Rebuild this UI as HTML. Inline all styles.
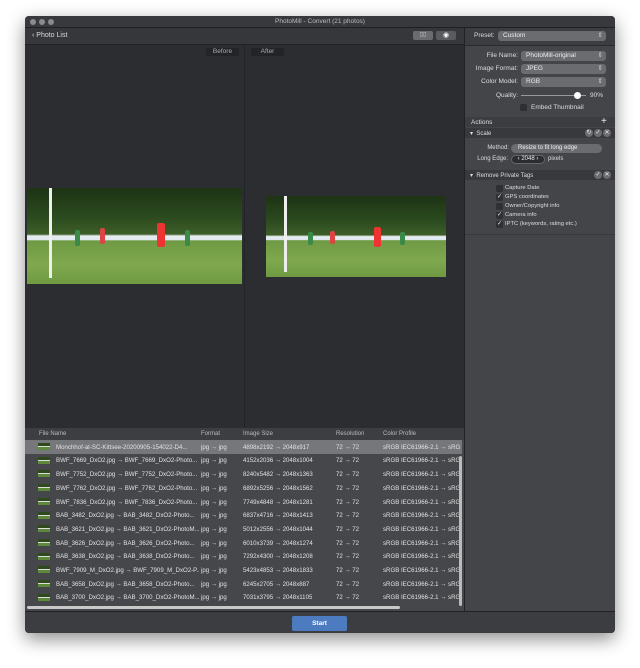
<!DOCTYPE html>
<html><head><meta charset="utf-8"><style>
*{box-sizing:border-box;margin:0;padding:0}
body{width:640px;height:668px;background:#fff;position:relative;overflow:hidden;font-family:"Liberation Sans",sans-serif;color:#ddd}
.a{position:absolute}
.win{left:25px;top:16px;width:590px;height:617px;background:#2c2d31;box-shadow:0 6px 18px rgba(0,0,0,.45);border-radius:4px;overflow:hidden}
.t{font-size:6.5px;white-space:nowrap}
.pop{background:#6b6c70;border-radius:3px;height:10px;font-size:6.5px;color:#eee;padding:1px 0 0 5px}
.pop:after{content:"⇕";position:absolute;right:3px;top:0;font-size:6.5px;color:#ccc}
.cb{width:7px;height:7px;background:#2f3034;border-radius:1.5px;position:absolute;font-size:6px;color:#eee;line-height:7px;text-align:center}
.row{position:absolute;left:0;width:437px;height:13.7px;font-size:6.1px;color:#e2e2e2;overflow:hidden}
.row span{position:absolute;top:3.8px;white-space:nowrap;overflow:hidden}
.row span:nth-of-type(1){width:143px}
.th{position:absolute;left:13px;top:3px;width:12px;height:7px;background:linear-gradient(#2e4a1c 0 45%,#ddd 45% 55%,#5c8a3a 55%)}
.ic{position:absolute;width:8px;height:8px;border-radius:50%;background:#6b6c70;font-size:6px;color:#eee;text-align:center;line-height:8px}
.photo{position:absolute;background:linear-gradient(180deg,#1d3315 0%,#2b4a1e 30%,#3d5e28 48%,#e8eef2 50%,#dde7ee 54%,#6f9a44 55%,#7fa84e 80%,#6f9a42 100%)}
.p{position:absolute;width:5px;height:16px;border-radius:2px}
</style></head><body>
<div class="a win">
 <div class="a" style="left:0;top:0;width:590px;height:12px;background:#38393c;border-bottom:1px solid #1f2023"></div>
 <div class="a" style="left:5px;top:3px;width:6px;height:6px;border-radius:50%;background:#8a8b8e"></div>
 <div class="a" style="left:14px;top:3px;width:6px;height:6px;border-radius:50%;background:#8a8b8e"></div>
 <div class="a" style="left:23px;top:3px;width:6px;height:6px;border-radius:50%;background:#8a8b8e"></div>
 <div class="a t" style="left:0;width:590px;top:2px;text-align:center;color:#bbb">PhotoMill - Convert (21 photos)</div>
 <div class="a" style="left:0;top:12px;width:440px;height:17px;background:#36373b;border-bottom:1px solid #222"></div>
 <div class="a t" style="left:7px;top:16px;font-size:7px;color:#ddd">‹ Photo List</div>
 <div class="a" style="left:388px;top:15px;width:20px;height:9px;background:#6b6c70;border-radius:2px;font-size:6px;text-align:center;color:#ccc">▯▯</div>
 <div class="a" style="left:411px;top:15px;width:20px;height:9px;background:#5a5b5f;border-radius:2px;font-size:7px;text-align:center;color:#fff;line-height:9px">◉</div>
 <div class="a" style="left:0;top:29px;width:439px;height:383px;background:#2c2d31"></div>
 <div class="a" style="left:219px;top:29px;width:1px;height:383px;background:#232427"></div>
 <div class="a t" style="left:181px;top:32px;width:33px;height:8px;background:#232427;text-align:center;color:#aaa;font-size:6.5px">Before</div>
 <div class="a t" style="left:226px;top:32px;width:33px;height:8px;background:#232427;text-align:center;color:#aaa;font-size:6.5px">After</div>
 <div class="photo" style="left:2px;top:172px;width:215px;height:96px"></div>
 <div class="a" style="left:24px;top:172px;width:3px;height:90px;background:#eee"></div>
 <div class="p" style="left:75px;top:212px;background:#d44"></div><div class="p" style="left:50px;top:214px;background:#3a8a4a"></div>
 <div class="p" style="left:132px;top:207px;width:8px;height:24px;background:#e33"></div><div class="p" style="left:160px;top:214px;background:#3a8a4a"></div>
 <div class="photo" style="left:241px;top:180px;width:180px;height:81px"></div>
 <div class="a" style="left:259px;top:180px;width:3px;height:76px;background:#eee"></div>
 <div class="p" style="left:305px;top:215px;background:#d44;height:13px"></div><div class="p" style="left:283px;top:216px;background:#3a8a4a;height:13px"></div>
 <div class="p" style="left:349px;top:211px;width:7px;height:20px;background:#e33"></div><div class="p" style="left:375px;top:216px;background:#3a8a4a;height:13px"></div>
 <div class="a" style="left:0;top:412px;width:439px;height:183px;background:#46474b"></div>
 <div class="a" style="left:0;top:412px;width:439px;height:12px;background:#3d3e42"></div>
 <div class="a t" style="left:14px;top:415px;color:#bbb;font-size:6px">File Name</div>
 <div class="a t" style="left:176px;top:415px;color:#bbb;font-size:6px">Format</div>
 <div class="a t" style="left:218px;top:415px;color:#bbb;font-size:6px">Image Size</div>
 <div class="a t" style="left:311px;top:415px;color:#bbb;font-size:6px">Resolution</div>
 <div class="a t" style="left:358px;top:415px;color:#bbb;font-size:6px">Color Profile</div>
 <div class="a" style="left:0;top:424px;width:439px;height:166px">
  <div class="row" style="top:0;background:#76777b"><i class="th"></i><span style="left:31px">Monchhof-at-SC-Kittsee-20200905-154022-D4...</span><span style="left:176px">jpg → jpg</span><span style="left:218px">4898x2192 → 2048x917</span><span style="left:311px">72 → 72</span><span style="left:358px">sRGB IEC61966-2.1 → sRG</span></div>
  <div class="row" style="top:13.7px"><i class="th"></i><span style="left:31px">BWF_7669_DxO2.jpg → BWF_7669_DxO2-Photo...</span><span style="left:176px">jpg → jpg</span><span style="left:218px">4152x2036 → 2048x1004</span><span style="left:311px">72 → 72</span><span style="left:358px">sRGB IEC61966-2.1 → sRG</span></div>
  <div class="row" style="top:27.4px"><i class="th"></i><span style="left:31px">BWF_7752_DxO2.jpg → BWF_7752_DxO2-Photo...</span><span style="left:176px">jpg → jpg</span><span style="left:218px">8240x5482 → 2048x1363</span><span style="left:311px">72 → 72</span><span style="left:358px">sRGB IEC61966-2.1 → sRG</span></div>
  <div class="row" style="top:41.1px"><i class="th"></i><span style="left:31px">BWF_7762_DxO2.jpg → BWF_7762_DxO2-Photo...</span><span style="left:176px">jpg → jpg</span><span style="left:218px">6892x5256 → 2048x1562</span><span style="left:311px">72 → 72</span><span style="left:358px">sRGB IEC61966-2.1 → sRG</span></div>
  <div class="row" style="top:54.8px"><i class="th"></i><span style="left:31px">BWF_7836_DxO2.jpg → BWF_7836_DxO2-Photo...</span><span style="left:176px">jpg → jpg</span><span style="left:218px">7749x4848 → 2048x1281</span><span style="left:311px">72 → 72</span><span style="left:358px">sRGB IEC61966-2.1 → sRG</span></div>
  <div class="row" style="top:68.5px"><i class="th"></i><span style="left:31px">BAB_3482_DxO2.jpg → BAB_3482_DxO2-Photo...</span><span style="left:176px">jpg → jpg</span><span style="left:218px">6837x4716 → 2048x1413</span><span style="left:311px">72 → 72</span><span style="left:358px">sRGB IEC61966-2.1 → sRG</span></div>
  <div class="row" style="top:82.2px"><i class="th"></i><span style="left:31px">BAB_3621_DxO2.jpg → BAB_3621_DxO2-PhotoM...</span><span style="left:176px">jpg → jpg</span><span style="left:218px">5012x2556 → 2048x1044</span><span style="left:311px">72 → 72</span><span style="left:358px">sRGB IEC61966-2.1 → sRG</span></div>
  <div class="row" style="top:95.9px"><i class="th"></i><span style="left:31px">BAB_3626_DxO2.jpg → BAB_3626_DxO2-Photo...</span><span style="left:176px">jpg → jpg</span><span style="left:218px">6010x3739 → 2048x1274</span><span style="left:311px">72 → 72</span><span style="left:358px">sRGB IEC61966-2.1 → sRG</span></div>
  <div class="row" style="top:109.6px"><i class="th"></i><span style="left:31px">BAB_3638_DxO2.jpg → BAB_3638_DxO2-Photo...</span><span style="left:176px">jpg → jpg</span><span style="left:218px">7292x4300 → 2048x1208</span><span style="left:311px">72 → 72</span><span style="left:358px">sRGB IEC61966-2.1 → sRG</span></div>
  <div class="row" style="top:123.3px"><i class="th"></i><span style="left:31px">BWF_7909_M_DxO2.jpg → BWF_7909_M_DxO2-P...</span><span style="left:176px">jpg → jpg</span><span style="left:218px">5423x4853 → 2048x1833</span><span style="left:311px">72 → 72</span><span style="left:358px">sRGB IEC61966-2.1 → sRG</span></div>
  <div class="row" style="top:137px"><i class="th"></i><span style="left:31px">BAB_3658_DxO2.jpg → BAB_3658_DxO2-Photo...</span><span style="left:176px">jpg → jpg</span><span style="left:218px">6245x2705 → 2048x887</span><span style="left:311px">72 → 72</span><span style="left:358px">sRGB IEC61966-2.1 → sRG</span></div>
  <div class="row" style="top:150.7px"><i class="th"></i><span style="left:31px">BAB_3700_DxO2.jpg → BAB_3700_DxO2-PhotoM...</span><span style="left:176px">jpg → jpg</span><span style="left:218px">7031x3795 → 2048x1105</span><span style="left:311px">72 → 72</span><span style="left:358px">sRGB IEC61966-2.1 → sRG</span></div>
 </div>
 <div class="a" style="left:434px;top:440px;width:3px;height:150px;background:#bbb;border-radius:2px"></div>
 <div class="a" style="left:2px;top:590px;width:373px;height:3px;background:#c8c8c8;border-radius:2px"></div>
 <div class="a" style="left:439px;top:12px;width:1px;height:583px;background:#222"></div>
 <!-- right panel -->
 <div class="a" style="left:440px;top:12px;width:150px;height:583px;background:#444549"></div>
 <div class="a" style="left:440px;top:12px;width:150px;height:18px;background:#3c3d41;border-bottom:1px solid #2a2b2e"></div>
 <div class="a t" style="left:449px;top:16px;color:#ddd">Preset:</div>
 <div class="a pop" style="left:473px;top:15px;width:108px">Custom</div>
 <div class="a t" style="left:433px;top:36px;width:60px;text-align:right">File Name:</div>
 <div class="a pop" style="left:496px;top:35px;width:85px">PhotoMill-original</div>
 <div class="a t" style="left:433px;top:49px;width:60px;text-align:right">Image Format:</div>
 <div class="a pop" style="left:496px;top:48px;width:85px">JPEG</div>
 <div class="a t" style="left:433px;top:62px;width:60px;text-align:right">Color Model:</div>
 <div class="a pop" style="left:496px;top:61px;width:85px">RGB</div>
 <div class="a t" style="left:433px;top:76px;width:60px;text-align:right">Quality:</div>
 <div class="a" style="left:496px;top:79px;width:65px;height:1px;background:#999"></div>
 <div class="a" style="left:549px;top:76px;width:7px;height:7px;border-radius:50%;background:#fff"></div>
 <div class="a t" style="left:565px;top:76px">90%</div>
 <div class="cb" style="left:495px;top:88px"></div>
 <div class="a t" style="left:506px;top:88px">Embed Thumbnail</div>
 <div class="a" style="left:440px;top:101px;width:150px;height:10px;background:#3c3d41"></div>
 <div class="a t" style="left:446px;top:103px">Actions</div>
 <div class="a t" style="left:576px;top:100px;font-size:10px;color:#eee">+</div>
 <div class="a" style="left:440px;top:112px;width:150px;height:10px;background:#38393d"></div>
 <div class="a t" style="left:445px;top:114px;font-size:6px">▾&nbsp;&nbsp;Scale</div>
 <div class="ic" style="left:560px;top:113px">↻</div><div class="ic" style="left:569px;top:113px">✓</div><div class="ic" style="left:578px;top:113px">✕</div>
 <div class="a t" style="left:444px;top:129px;width:40px;text-align:right;font-size:6px">Method:</div>
 <div class="a" style="left:486px;top:128px;width:91px;height:9px;border-radius:5px;background:#6b6c70;font-size:6px;padding:1px 0 0 7px;color:#eee">Resize to fit long edge</div>
 <div class="a t" style="left:443px;top:140px;width:40px;text-align:right;font-size:6px">Long Edge:</div>
 <div class="a" style="left:486px;top:139px;width:34px;height:9px;border-radius:5px;background:#2c2d31;border:1px solid #666;font-size:6px;text-align:center;color:#eee">‹ 2048 ›</div>
 <div class="a t" style="left:523px;top:140px;font-size:6px">pixels</div>
 <div class="a" style="left:440px;top:154px;width:150px;height:10px;background:#38393d"></div>
 <div class="a t" style="left:445px;top:156px;font-size:6px">▾&nbsp;&nbsp;Remove Private Tags</div>
 <div class="ic" style="left:569px;top:155px">✓</div><div class="ic" style="left:578px;top:155px">✕</div>
 <div class="cb" style="left:471px;top:169px"></div><div class="a t" style="left:480px;top:169px;font-size:5.8px">Capture Date</div>
 <div class="cb" style="left:471px;top:178px">✓</div><div class="a t" style="left:480px;top:178px;font-size:5.8px">GPS coordinates</div>
 <div class="cb" style="left:471px;top:187px"></div><div class="a t" style="left:480px;top:187px;font-size:5.8px">Owner/Copyright info</div>
 <div class="cb" style="left:471px;top:196px">✓</div><div class="a t" style="left:480px;top:196px;font-size:5.8px">Camera info</div>
 <div class="cb" style="left:471px;top:205px">✓</div><div class="a t" style="left:480px;top:205px;font-size:5.8px">IPTC (keywords, rating etc.)</div>
 <div class="a" style="left:440px;top:218px;width:150px;height:1px;background:#38393d"></div>
 <div class="a" style="left:0;top:595px;width:590px;height:22px;background:#3c3d41;border-top:1px solid #222"></div>
 <div class="a" style="left:267px;top:600px;width:55px;height:15px;background:#4c7bc0;border-radius:2px;font-size:6.5px;color:#fff;text-align:center;line-height:15px;font-weight:bold">Start</div>
</div>
</body></html>
